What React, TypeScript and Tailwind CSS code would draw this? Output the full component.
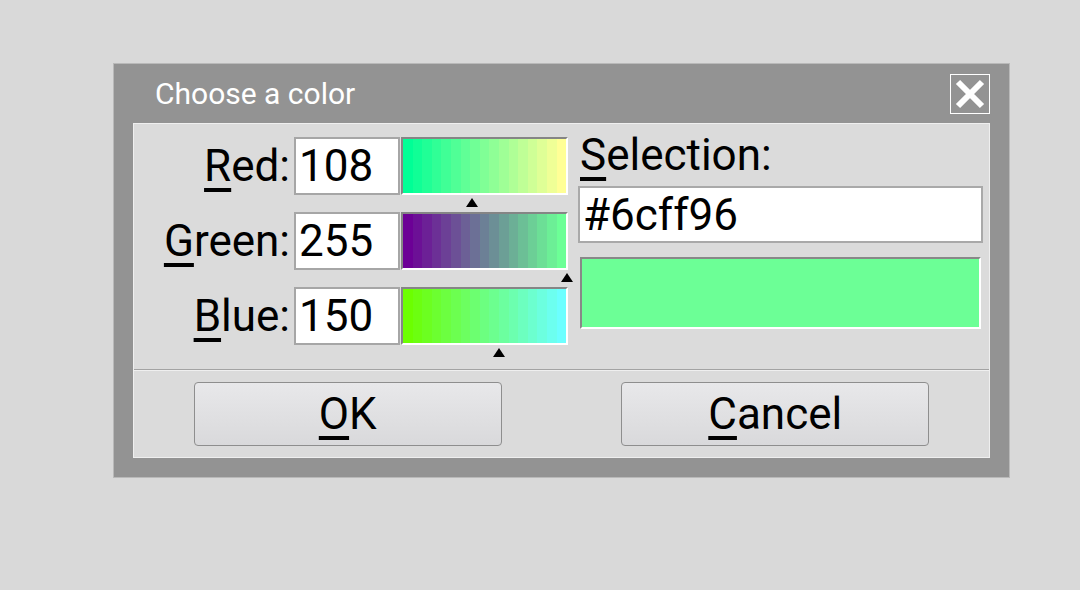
import React from 'react';

type Channel = {
  label: string;
  key: string; // the underlined first letter
  value: number;
  from: [number, number, number];
  to: [number, number, number];
};

const rgb = { r: 108, g: 255, b: 150 };

const channels: Channel[] = [
  { label: 'ed:', key: 'R', value: rgb.r, from: [0, rgb.g, rgb.b], to: [255, rgb.g, rgb.b] },
  { label: 'reen:', key: 'G', value: rgb.g, from: [rgb.r, 0, rgb.b], to: [rgb.r, 255, rgb.b] },
  { label: 'lue:', key: 'B', value: rgb.b, from: [rgb.r, rgb.g, 0], to: [rgb.r, rgb.g, 255] },
];

const STEPS = 17;

// banded gradient, like the old toolkit draws it
const bandColor = (from: number[], to: number[], i: number): string => {
  const t = i / (STEPS - 1);
  const c = from.map((f, k) => Math.round(f + (to[k] - f) * t));
  return `rgb(${c[0]}, ${c[1]}, ${c[2]})`;
};

const Key = ({ children }: { children: React.ReactNode }) => (
  <span className="underline decoration-[4px] underline-offset-[7px]">{children}</span>
);

const Marker = ({ value }: { value: number }) => (
  <svg
    width="12"
    height="9"
    viewBox="0 0 12 9"
    className="mt-[3px] shrink-0"
    style={{ marginLeft: 2 + (value / 255) * 164 - 6 }}
  >
    <polygon points="6,0 12,9 0,9" fill="#000" />
  </svg>
);

const ChannelRow = ({ ch }: { ch: Channel }) => (
  <div className="flex flex-col">
    <div className="flex h-[58px] items-center">
      <div className="w-[156px] text-right leading-[58px]">
        <Key>{ch.key}</Key>
        {ch.label}
      </div>
      <div className="ml-[4px] flex h-[58px] w-[106px] items-center border-2 border-[#a6a6a6] bg-white pl-[3px]">
        {ch.value}
      </div>
      <div className="ml-[1px] flex h-[58px] w-[167px] border-2 border-t-[#858585] border-l-[#858585] border-b-white border-r-white">
        {Array.from({ length: STEPS }).map((_, i) => (
          <div key={i} className="h-full flex-1" style={{ background: bandColor(ch.from, ch.to, i) }} />
        ))}
      </div>
    </div>
    <div className="flex h-[17px] pl-[267px]">
      <Marker value={ch.value} />
    </div>
  </div>
);

const DialogButton = ({ k, rest }: { k: string; rest: string }) => (
  <div className="flex justify-center">
    <button className="flex h-[64px] w-[308px] items-center justify-center rounded-[4px] border border-[#8e8e8e] bg-gradient-to-b from-[#e8e8ea] to-[#d9d9db] text-[44px] text-black">
      <Key>{k}</Key>
      {rest}
    </button>
  </div>
);

export default function App() {
  return (
    <div className="h-[590px] w-[1080px] bg-[#d9d9d9] pl-[113px] pt-[63px] font-['Roboto',sans-serif] text-black">
      <div className="flex h-[415px] w-[897px] flex-col border border-[#b9b9b9] bg-[#939393] px-[19px] pb-[19px]">
        {/* title bar */}
        <div className="flex h-[59px] items-center justify-between pl-[22px]">
          <span className="text-[30px] text-white">Choose a color</span>
          <div className="flex h-[40px] w-[40px] items-center justify-center border border-white">
            <svg width="38" height="38" viewBox="0 0 38 38">
              <path d="M7 7 L31 31 M31 7 L7 31" stroke="#fff" strokeWidth="6" />
            </svg>
          </div>
        </div>

        {/* body */}
        <div className="flex flex-1 flex-col border border-[#efefef] bg-[#dbdbdb] text-[44px]">
          <div className="flex h-[245px]">
            <div className="flex w-[434px] shrink-0 flex-col pt-[13px]">
              {channels.map((ch) => (
                <ChannelRow key={ch.key} ch={ch} />
              ))}
            </div>
            <div className="ml-[10px] flex w-[405px] flex-col">
              <div className="h-[62px] leading-[62px] pl-[2px]">
                <Key>S</Key>election:
              </div>
              <div className="flex h-[57px] items-center border-2 border-[#a9a9a9] bg-white pl-[3px]">#6cff96</div>
              <div className="mx-[2px] mt-[14px] h-[72px] border-2 border-t-[#888888] border-l-[#888888] border-b-white border-r-white bg-[#6cff96]" />
            </div>
          </div>
          <div className="h-px bg-[#a3a3a3]" />
          <div className="h-px bg-[#efefef]" />
          <div className="grid flex-1 grid-cols-2 items-center">
            <DialogButton k="O" rest="K" />
            <DialogButton k="C" rest="ancel" />
          </div>
        </div>
      </div>
    </div>
  );
}
